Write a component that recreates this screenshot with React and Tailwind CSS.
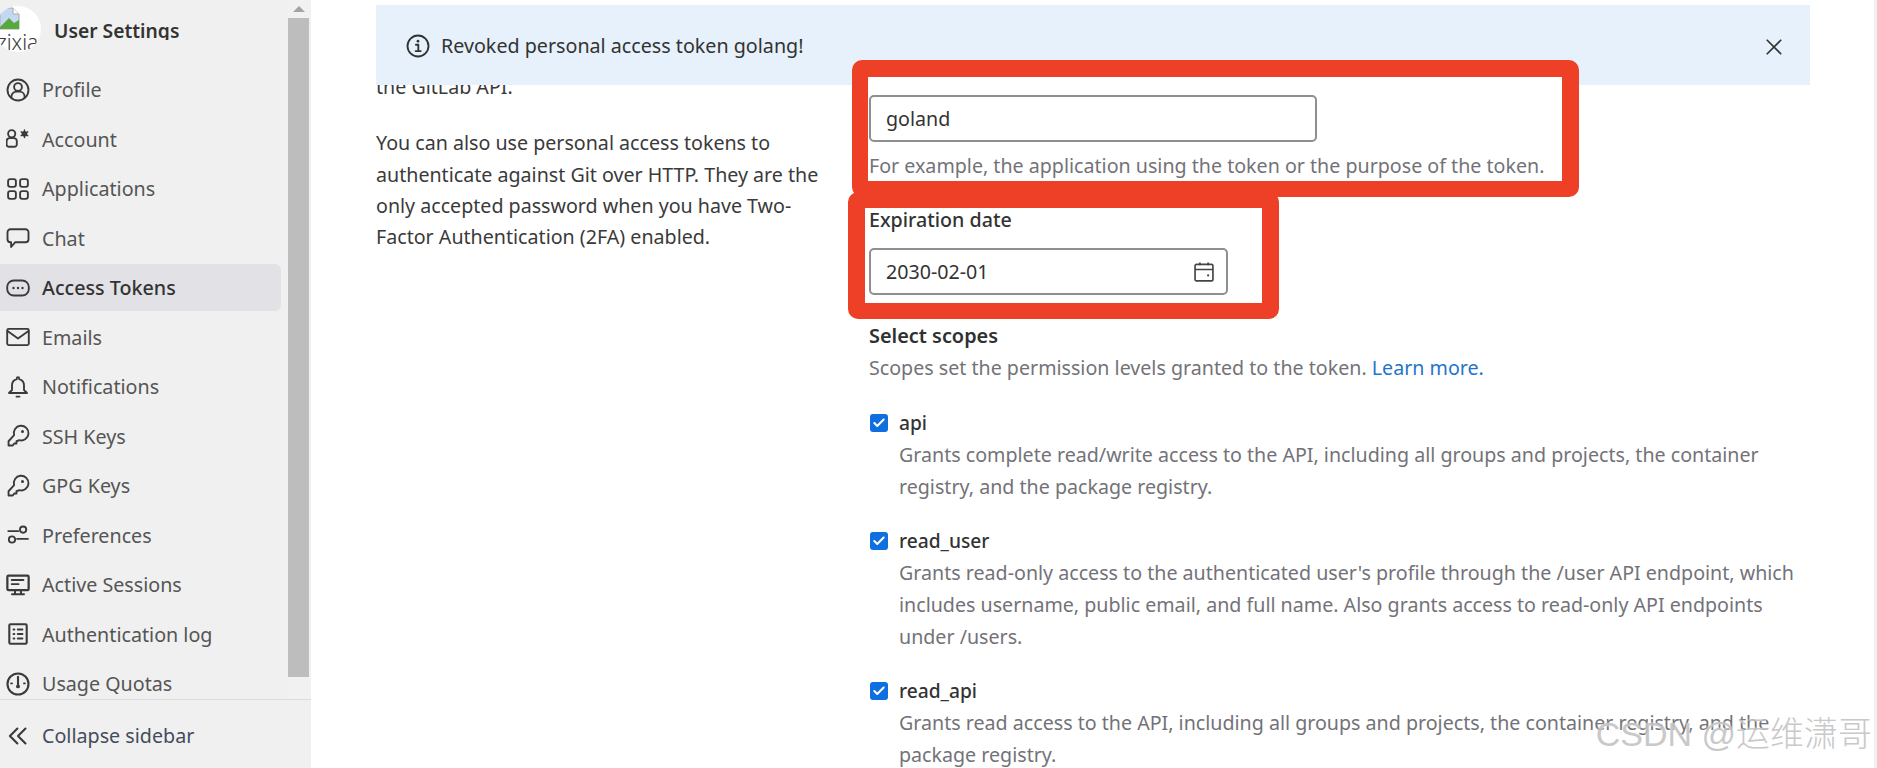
import { Check } from 'lucide-react';

const Svg = ({ children }) => (
  <svg viewBox="0 0 16 16" fill="none" stroke="currentColor" strokeWidth="1.25" strokeLinecap="round" strokeLinejoin="round" className="w-[24px] h-[24px] shrink-0 text-[#3a3a3a]">
    {children}
  </svg>
);

const Key = () => (
  <Svg>
    <path d="M5.4 7.4 L1.7 11.5 V14.3 H4.5 L5.5 13 H7 V11.5 L8.9 10.8 A4.9 4.9 0 1 0 5.4 7.4Z" />
    <circle cx="11" cy="5" r="1" fill="currentColor" stroke="none" />
  </Svg>
);

const icons = {
  profile: (
    <Svg>
      <circle cx="8" cy="8" r="7" />
      <circle cx="8" cy="6" r="2.6" />
      <path d="M3.6 13 v-.6 a3.3 3.3 0 0 1 3.3-3.3 h2.2 a3.3 3.3 0 0 1 3.3 3.3 v.6" />
    </Svg>
  ),
  account: (
    <Svg>
      <circle cx="3.8" cy="4.5" r="2.4" />
      <path d="M2.4 7.4 h2.8 a2 2 0 0 1 2 2 v2.2 a1.6 1.6 0 0 1-1.6 1.6 H2 a1.6 1.6 0 0 1-1.6-1.6 V9.4 a2 2 0 0 1 2-2z" />
      <circle cx="12.3" cy="4.5" r="1.4" fill="currentColor" strokeWidth="1" />
      <path d="M12.3 2v5M10.1 3.2l4.4 2.6M14.5 3.2l-4.4 2.6" strokeWidth="0.9" />
    </Svg>
  ),
  apps: (
    <Svg>
      <rect x="1.4" y="1.4" width="5.2" height="5.2" rx="1.4" />
      <rect x="9.4" y="1.4" width="5.2" height="5.2" rx="1.4" />
      <rect x="1.4" y="9.4" width="5.2" height="5.2" rx="1.4" />
      <rect x="9.4" y="9.4" width="5.2" height="5.2" rx="1.4" />
    </Svg>
  ),
  chat: (
    <Svg>
      <path d="M3 2.2 h10 a2 2 0 0 1 2 2 v4.6 a2 2 0 0 1-2 2 H6.2 L3.4 14 v-3.2 H3 a2 2 0 0 1-2-2 V4.2 a2 2 0 0 1 2-2z" />
    </Svg>
  ),
  token: (
    <Svg>
      <rect x="0.8" y="3" width="14.4" height="10" rx="4.4" />
      <circle cx="5" cy="8" r="0.8" fill="currentColor" stroke="none" />
      <circle cx="8" cy="8" r="0.8" fill="currentColor" stroke="none" />
      <circle cx="11" cy="8" r="0.8" fill="currentColor" stroke="none" />
    </Svg>
  ),
  mail: (
    <Svg>
      <rect x="0.8" y="2.6" width="14.4" height="10.8" rx="1" />
      <path d="M1 4 L8 9 L15 4" />
    </Svg>
  ),
  bell: (
    <Svg>
      <path d="M8 1.4 a.8.8 0 0 1 .8.8 v.6 C11 3.4 12 5 12 7 v3 l2 2 H2 l2-2 V7 c0-2 1-3.6 3.2-4.2 v-.6 A.8.8 0 0 1 8 1.4z" />
      <path d="M7 14.4 h2" />
    </Svg>
  ),
  key: <Key />,
  prefs: (
    <Svg>
      <path d="M1.5 5.4 H8.2" />
      <circle cx="11.4" cy="4.4" r="2.1" />
      <circle cx="4" cy="11" r="2.1" />
      <path d="M7.4 10.6 H14.6" />
    </Svg>
  ),
  sessions: (
    <Svg>
      <rect x="0.9" y="1.8" width="14.2" height="9.6" rx="0.8" strokeWidth="1.5" />
      <path d="M3.8 4.6 H11.6 M3.8 7.4 H8.4" strokeWidth="1.3" />
      <path d="M6 11.4 V13.8 M10 11.4 V13.8 M4 14.2 H12" strokeWidth="1.3" />
    </Svg>
  ),
  log: (
    <Svg>
      <rect x="2.2" y="1.5" width="11.6" height="13" rx="0.8" strokeWidth="1.4" />
      <path d="M5 5 h.6 M5 8 h.6 M5 11 h.6 M7.8 5 H11 M7.8 8 H11 M7.8 11 H11" strokeWidth="1.2" />
    </Svg>
  ),
  usage: (
    <Svg>
      <circle cx="8" cy="8" r="7" strokeWidth="1.4" />
      <path d="M8 3.2 V8.6" strokeWidth="1.4" />
      <circle cx="8" cy="9.6" r="1.3" fill="currentColor" stroke="none" />
      <path d="M3.4 7.6 h.6 M12 7.6 h.6" />
    </Svg>
  ),
};

const navItems = [
  { label: 'Profile', icon: 'profile' },
  { label: 'Account', icon: 'account' },
  { label: 'Applications', icon: 'apps' },
  { label: 'Chat', icon: 'chat' },
  { label: 'Access Tokens', icon: 'token', active: true },
  { label: 'Emails', icon: 'mail' },
  { label: 'Notifications', icon: 'bell' },
  { label: 'SSH Keys', icon: 'key' },
  { label: 'GPG Keys', icon: 'key' },
  { label: 'Preferences', icon: 'prefs' },
  { label: 'Active Sessions', icon: 'sessions' },
  { label: 'Authentication log', icon: 'log' },
  { label: 'Usage Quotas', icon: 'usage' },
];

const scopes = [
  {
    name: 'api',
    text: 'Grants complete read/write access to the API, including all groups and projects, the container registry, and the package registry.',
  },
  {
    name: 'read_user',
    text: "Grants read-only access to the authenticated user's profile through the /user API endpoint, which includes username, public email, and full name. Also grants access to read-only API endpoints under /users.",
  },
  {
    name: 'read_api',
    text: 'Grants read access to the API, including all groups and projects, the container registry, and the package registry.',
  },
];

function Avatar() {
  return (
    <div className="-ml-[5px] mt-[6px] w-[46px] h-[46px] shrink-0 rounded-full overflow-hidden bg-white">
      <svg viewBox="0 0 20 23" className="ml-[5px] mt-[1px] w-[20px] h-[23px] block">
        <path d="M0 1 H13 L19 7 V22 H0Z" fill="#c4d8f4" stroke="#a9a9a9" strokeWidth="1" />
        <path d="M13 1 V7 H19" fill="#fff" stroke="#a9a9a9" strokeWidth="1" />
        <path d="M0 20 L9 11 L14 16 L19 13 V22 H0Z" fill="#58a83d" />
      </svg>
      <div className="ml-[2px] mt-[1px] text-[21px] leading-[22px] font-light text-[#3a3a3a] whitespace-nowrap">zixia</div>
    </div>
  );
}

function Sidebar() {
  return (
    <aside className="w-[311px] h-full shrink-0 flex flex-col bg-[#f0f0f0]">
      <div className="flex h-[699px] overflow-hidden">
        <div className="w-[287px] overflow-hidden pr-[6px]">
          <div className="h-[66px] flex items-start gap-[13px]">
            <Avatar />
            <div className="mt-[19px] h-[21px] overflow-hidden text-[19.3px] leading-[24px] font-semibold text-[#333] whitespace-nowrap">User Settings</div>
          </div>
          <nav className="flex flex-col gap-[2.5px]">
            {navItems.map(item => (
              <div
                key={item.label}
                className={`h-[47px] shrink-0 flex items-center gap-[12px] pl-[6px] rounded-r-[6px] text-[19.7px] whitespace-nowrap ${item.active ? 'bg-[#e1e1e6] text-[#333] font-medium' : 'text-[#555]'}`}
              >
                {icons[item.icon]}
                <span className="pt-[1px]">{item.label}</span>
              </div>
            ))}
          </nav>
        </div>
        <div className="w-[24px] flex flex-col bg-[#f1f1f1]">
          <div className="h-[18px] flex justify-center items-center">
            <div className="w-0 h-0 border-x-[6px] border-x-transparent border-b-[6px] border-b-[#a3a3a3]" />
          </div>
          <div className="ml-[1px] w-[21px] h-[659px] bg-[#bdbdbd]" />
        </div>
      </div>
      <div className="flex-1 flex items-center gap-[12px] pl-[6px] pt-[3px] border-t border-[#dcdcdc] text-[19.7px] text-[#444c5c] whitespace-nowrap">
        <svg viewBox="0 0 16 16" fill="none" stroke="#3a3a3a" strokeWidth="1.4" strokeLinecap="round" strokeLinejoin="round" className="w-[24px] h-[24px] shrink-0">
          <path d="M7.6 3 L2.6 8 L7.6 13 M13 3 L8 8 L13 13" />
        </svg>
        <span>Collapse sidebar</span>
      </div>
    </aside>
  );
}

function Banner() {
  return (
    <div className="absolute z-10 left-[65px] top-[5px] w-[1434px] h-[80px] flex items-center pl-[30px] pr-[27px] pt-[2px] bg-[#e6f1fb] text-[#333]">
      <svg viewBox="0 0 16 16" fill="none" stroke="#333" strokeWidth="1.25" className="w-[24px] h-[24px] shrink-0">
        <circle cx="8" cy="8" r="7" />
        <path d="M6.6 7.2 H8.2 V11.4 M6.4 11.4 H9.8" strokeLinecap="round" />
        <circle cx="8" cy="4.8" r="0.9" fill="#333" stroke="none" />
      </svg>
      <span className="ml-[11px] text-[19.7px]">Revoked personal access token golang!</span>
      <svg viewBox="0 0 16 16" fill="none" stroke="#333" strokeWidth="1.5" strokeLinecap="round" className="ml-auto mt-[1px] w-[18px] h-[18px]">
        <path d="M2 2 L14 14 M14 2 L2 14" />
      </svg>
    </div>
  );
}

function Scope({ name, text }) {
  return (
    <div className="flex gap-[11px] mb-[22px]">
      <div className="w-[20px] shrink-0 pt-[7px] pl-[2px]">
        <div className="w-[18px] h-[18px] rounded-[3px] bg-[#0f6fe0] flex items-center justify-center">
          <Check size={14} strokeWidth={3.5} color="#fff" />
        </div>
      </div>
      <div className="w-[900px]">
        <div className="text-[19.2px] leading-[32px] font-medium text-[#333]">{name}</div>
        <div className="text-[19.65px] leading-[32px] text-[#737278]">{text}</div>
      </div>
    </div>
  );
}

export default function App() {
  return (
    <div className="flex w-[1877px] h-[768px] overflow-hidden bg-white font-['Noto_Sans','Open_Sans',sans-serif]">
      <Sidebar />
      <main className="relative flex-1 h-full overflow-hidden">
        <Banner />
        <div className="grid grid-cols-[492px_1fr] pl-[65px] pr-[65px] -mt-[22px]">
          <div className="pt-[30px] w-[450px] text-[19.65px] leading-[31.4px] text-[#3a3a3a]">
            <p>You can generate a personal access token for each application you use that needs access to<br />the GitLab API.</p>
            <p className="mt-[25px]">You can also use personal access tokens to authenticate against Git over HTTP. They are the only accepted password when you have Two-Factor Authentication (2FA) enabled.</p>
          </div>
          <div>
            <p className="-mt-[6px] text-[19.65px] leading-[31.5px] text-[#3a3a3a] whitespace-nowrap">Enter the name of your application, and we'll return a unique personal access token.</p>
            {/* red annotation boxes from the screenshot */}
            <div className="relative z-20 mt-[56.5px] -ml-[16px] w-[727px] h-[137px] border-[16px] border-t-[17px] border-r-[17px] border-[#ee4026] rounded-[10px] bg-white">
              <div className="mt-[18px] ml-[1px] w-[448px] h-[47px] flex items-center pl-[15px] rounded-[5px] border-2 border-[#8f8f8f] text-[19.65px] text-[#333]">goland</div>
              <p className="mt-[10px] pl-[1px] text-[19.65px] leading-[28px] text-[#737278] whitespace-nowrap">For example, the application using the token or the purpose of the token.</p>
            </div>
            <div className="relative z-20 -mt-[5px] -ml-[20px] w-[431px] h-[127px] border-[17px] border-t-[16px] border-b-[16px] border-[#ee4026] rounded-[10px] bg-white">
              <div className="pl-[4px] -mt-[1px] text-[19.65px] leading-[26px] font-medium text-[#333]">Expiration date</div>
              <div className="mt-[15px] ml-[4px] w-[359px] h-[47px] flex items-center justify-between pl-[15px] pr-[11px] rounded-[5px] border-2 border-[#8f8f8f] text-[19.65px] text-[#333]">
                <span className="pt-[1px]">2030-02-01</span>
                <svg viewBox="0 0 16 16" fill="none" stroke="#444" strokeWidth="1.2" className="w-[22px] h-[22px]">
                  <rect x="1.5" y="2.5" width="13" height="12" rx="1" />
                  <path d="M1.5 6.2 H14.5 M5 1 V3 M11 1 V3" />
                  <circle cx="11" cy="10.5" r="0.8" fill="#444" stroke="none" />
                </svg>
              </div>
            </div>
            <div className="ml-[1px] mt-[3px] text-[19.9px] leading-[28px] font-semibold text-[#303030]">Select scopes</div>
            <p className="ml-[1px] mt-[1.5px] mb-[23px] text-[19.65px] leading-[32px] text-[#737278]">
              Scopes set the permission levels granted to the token. <span className="text-[#1f75cb]">Learn more.</span>
            </p>
            {scopes.map(scope => (
              <Scope key={scope.name} {...scope} />
            ))}
          </div>
        </div>
        <div className="absolute z-30 right-[2px] top-[715px] text-[34px] leading-[38px] font-light text-[#c4c4c4] opacity-90 [text-shadow:0_0_2px_#fff] font-['Liberation_Sans','Noto_Sans_CJK_SC',sans-serif] whitespace-nowrap">CSDN @运维潇哥</div>
      </main>
      <div className="w-[3px] h-full shrink-0 bg-[#f0f0f0]" />
    </div>
  );
}
